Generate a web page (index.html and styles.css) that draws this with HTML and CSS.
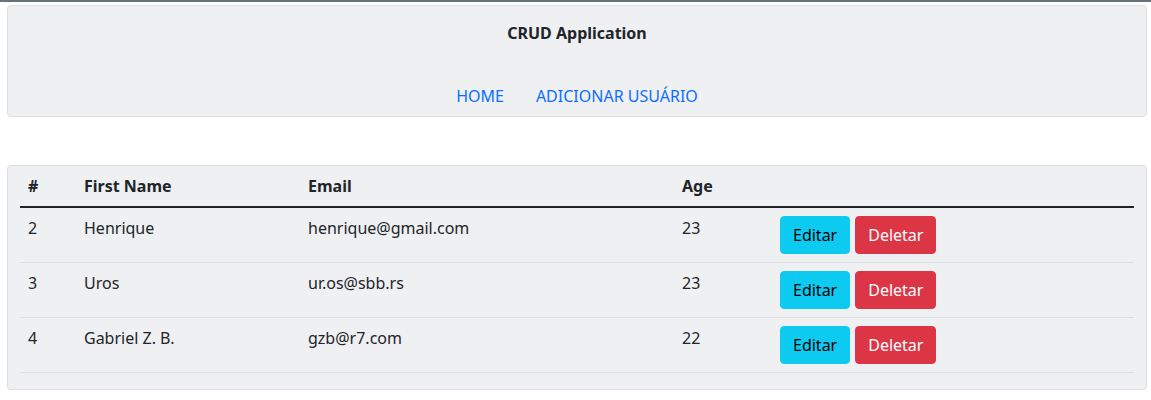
FILE: index.html
```html
<!DOCTYPE html>
<html lang="pt">
<head>
<meta charset="utf-8">
<title>CRUD Application</title>
<link rel="stylesheet" href="styles.css">
</head>
<body>
<div class="topline"></div>
<div class="page">
  <header class="card header">
    <h1 class="title">CRUD Application</h1>
    <nav class="nav">
      <a class="nav-link" href="#">HOME</a>
      <a class="nav-link" href="#">ADICIONAR USUÁRIO</a>
    </nav>
  </header>

  <section class="card table-card">
    <table class="table">
      <colgroup>
        <col class="c1"><col class="c2"><col class="c3"><col class="c4"><col class="c5">
      </colgroup>
      <thead>
        <tr><th>#</th><th>First Name</th><th>Email</th><th>Age</th><th></th></tr>
      </thead>
      <tbody>
        <tr>
          <td>2</td><td>Henrique</td><td>henrique@gmail.com</td><td>23</td>
          <td><span class="actions"><button class="btn btn-info">Editar</button><button class="btn btn-danger">Deletar</button></span></td>
        </tr>
        <tr>
          <td>3</td><td>Uros</td><td>ur.os@sbb.rs</td><td>23</td>
          <td><span class="actions"><button class="btn btn-info">Editar</button><button class="btn btn-danger">Deletar</button></span></td>
        </tr>
        <tr>
          <td>4</td><td>Gabriel Z. B.</td><td>gzb@r7.com</td><td>22</td>
          <td><span class="actions"><button class="btn btn-info">Editar</button><button class="btn btn-danger">Deletar</button></span></td>
        </tr>
      </tbody>
    </table>
  </section>
</div>
</body>
</html>
```

FILE: styles.css
```css
* { box-sizing: border-box; }
html, body { margin: 0; padding: 0; background: #fff; }
body {
  font-family: "Noto Sans", "Open Sans", "DejaVu Sans", sans-serif;
  font-size: 16px;
  line-height: 24px;
  color: #212529;
}
.topline { height: 2px; background: #66747a; }
.page {
  width: 1140px;
  margin-left: 7px;
  padding-top: 3px;
}
.card {
  background: #eff0f2;
  border: 1px solid #dcdee2;
  border-radius: 4px;
}
.header {
  padding: 15px 0 0;
  text-align: center;
}
.title {
  margin: 0;
  font-size: 16px;
  line-height: 24px;
  font-weight: 700;
}
.nav {
  display: flex;
  justify-content: center;
  margin-top: 31px;
}
.nav-link {
  display: block;
  padding: 8px 16px;
  color: #0d6efd;
  text-decoration: none;
}
.table-card {
  margin-top: 48px;
  padding: 0 12px 16px;
}
.table {
  width: 100%;
  border-collapse: collapse;
  table-layout: fixed;
}
.c1 { width: 56px; }
.c2 { width: 224px; }
.c3 { width: 374px; }
.c4 { width: 98px; }
.table th, .table td {
  padding: 8px;
  text-align: left;
  vertical-align: top;
  border-bottom: 1px solid #dcdee2;
}
.table th {
  font-weight: 700;
  border-bottom: 2px solid #212529;
}
.actions { display: flex; gap: 5px; }
.btn {
  font-family: inherit;
  font-size: 16px;
  line-height: 24px;
  padding: 6px 12px;
  border: 1px solid transparent;
  border-radius: 4px;
  cursor: pointer;
}
.btn-info { background: #0dcaf0; border-color: #0dcaf0; color: #000; }
.btn-danger { background: #dc3545; border-color: #dc3545; color: #fff; }
```
